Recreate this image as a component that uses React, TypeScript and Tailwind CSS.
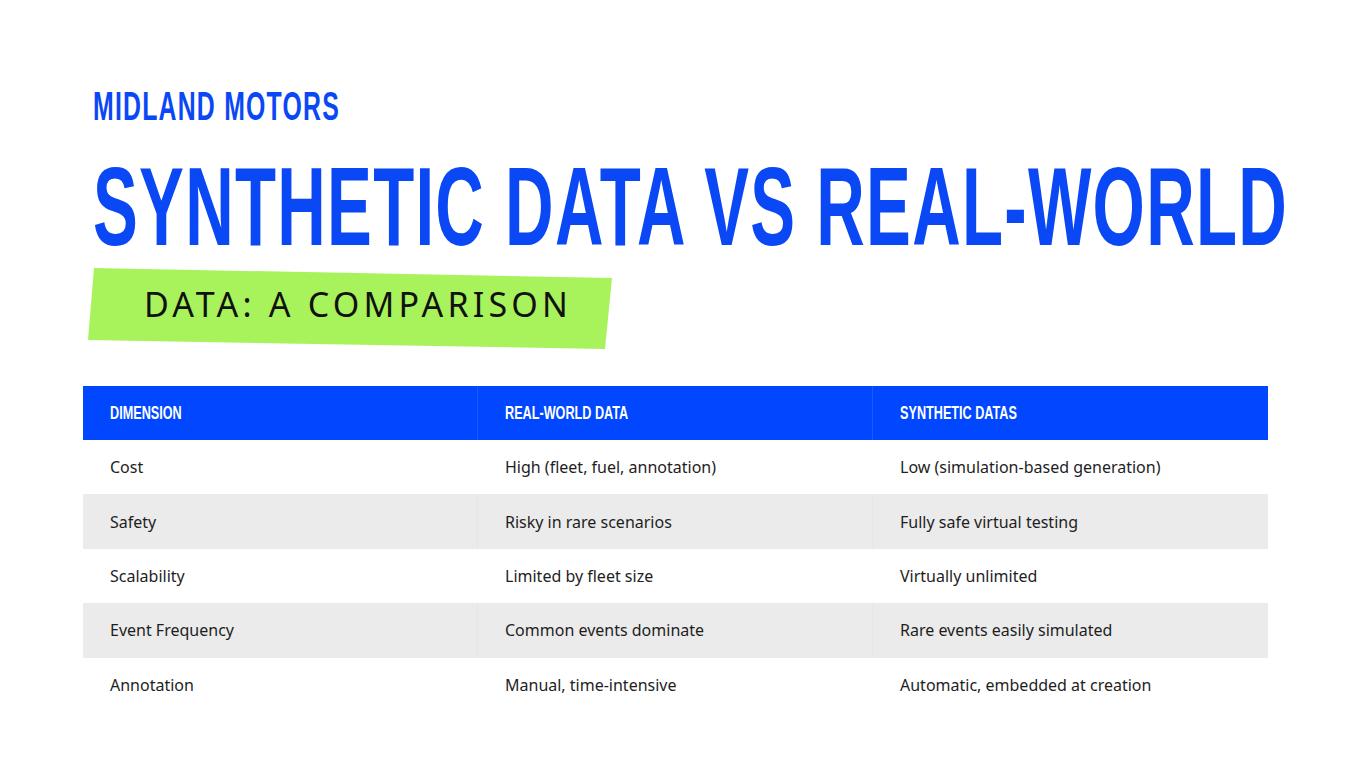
import React from "react";

const rows = [
  ["Cost", "High (fleet, fuel, annotation)", "Low (simulation-based generation)"],
  ["Safety", "Risky in rare scenarios", "Fully safe virtual testing"],
  ["Scalability", "Limited by fleet size", "Virtually unlimited"],
  ["Event Frequency", "Common events dominate", "Rare events easily simulated"],
  ["Annotation", "Manual, time-intensive", "Automatic, embedded at creation"],
];

const heads = ["DIMENSION", "REAL-WORLD DATA", "SYNTHETIC DATAS"];

export default function App() {
  return (
    <div className="w-[1366px] h-[768px] bg-white overflow-hidden relative">
      <div className="pl-[93px] pt-[84px]">
        <div className="h-[44px] whitespace-nowrap">
          <div className="inline-block origin-left scale-x-[0.62] tracking-[2px] text-[40px] leading-[44px] font-bold text-[#0a47f5] [font-family:'Liberation_Sans',sans-serif]">
            MIDLAND MOTORS
          </div>
        </div>
        <div className="mt-[24px] h-[110px] whitespace-nowrap">
          <div className="inline-block origin-left scale-x-[0.6] tracking-[2.1px] text-[112px] leading-[110px] font-bold text-[#0a47f5] [font-family:'Liberation_Sans',sans-serif]">
            SYNTHETIC DATA VS REAL-WORLD
          </div>
        </div>
      </div>
      <div className="relative ml-[88px] mt-[6px] w-[524px] h-[81px]">
        <div className="absolute inset-0 bg-[#a8f35c] [clip-path:polygon(6px_0,524px_10px,517px_81px,0_72px)]" />
        <div className="relative pl-[56px] pt-[14px] text-[34px] leading-[44px] tracking-[0.123em] text-[#111] [font-family:'Noto_Sans',sans-serif]">
          DATA: A COMPARISON
        </div>
      </div>
      <div className="ml-[83px] mt-[37px] w-[1185px] [font-family:'Noto_Sans',sans-serif]">
        <div className="grid grid-cols-3 h-[54px] bg-[#0047ff]">
          {heads.map((h, i) => (
            <div
              key={h}
              className={`flex items-center pl-[27px] whitespace-nowrap ${i < 2 ? "border-r border-[#1d58ff]" : ""}`}
            >
              <span className="inline-block origin-left scale-x-[0.666] text-[19px] font-bold text-white [font-family:'Liberation_Sans',sans-serif]">
                {h}
              </span>
            </div>
          ))}
        </div>
        {rows.map((r, ri) => (
          <div
            key={r[0]}
            className={`grid grid-cols-3 h-[54.4px] ${ri % 2 === 1 ? "bg-[#ebebeb]" : "bg-white"}`}
          >
            {r.map((c, ci) => (
              <div
                key={ci}
                className={`flex items-center pl-[27px] text-[16px] text-[#1e1e1e] ${
                  ri % 2 === 1 && ci < 2 ? "border-r border-[#e6e6e6]" : ""
                }`}
              >
                {c}
              </div>
            ))}
          </div>
        ))}
      </div>
    </div>
  );
}
